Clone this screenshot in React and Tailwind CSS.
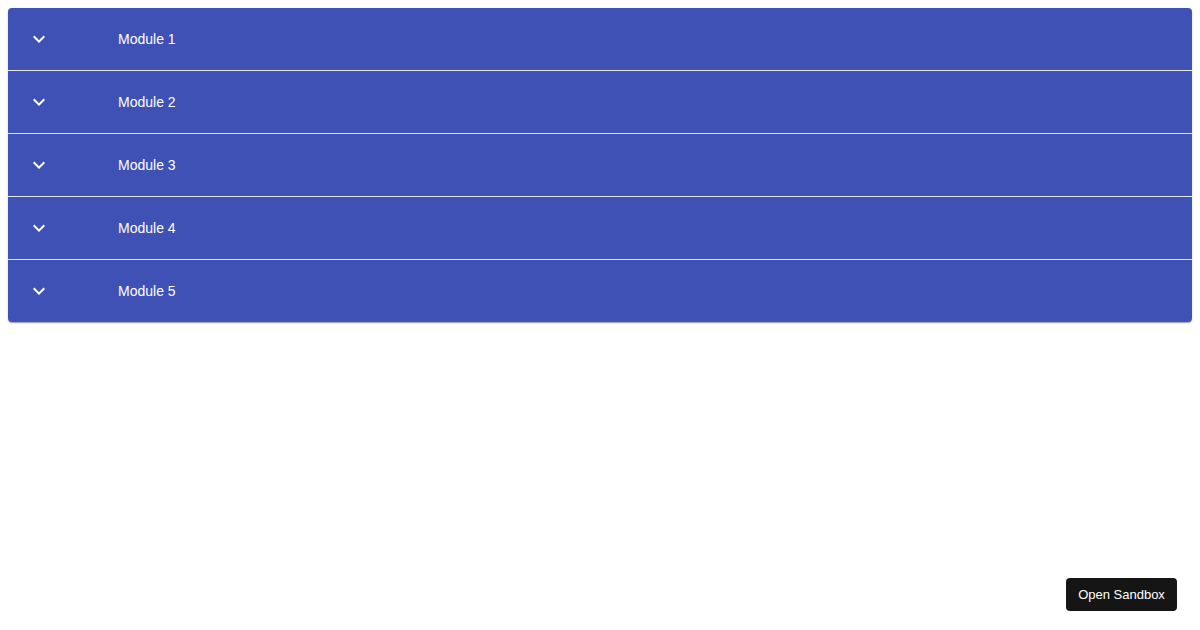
import React from "react";

function ExpandMore() {
  return (
    <svg width="24" height="24" viewBox="0 0 24 24" fill="white" aria-hidden="true">
      <path d="M16.59 8.59 12 13.17 7.41 8.59 6 10l6 6 6-6z" />
    </svg>
  );
}

export default function App() {
  const items = ["Module 1", "Module 2", "Module 3", "Module 4", "Module 5"];
  return (
    <div className="w-[1200px] h-[630px] bg-white relative" style={{ fontFamily: "'Liberation Sans', Arial, sans-serif" }}>
      <div className="p-2">
        <div className="rounded-[4px] overflow-hidden shadow-[0_2px_1px_-1px_rgba(0,0,0,0.2),0_1px_1px_0_rgba(0,0,0,0.14),0_1px_3px_0_rgba(0,0,0,0.12)] bg-[#3f51b5] flex flex-col">
          {items.map((t, i) => (
            <div key={t} className={"flex items-center text-white text-[14px] " + (i > 0 ? "h-[63px] border-t border-[rgba(255,255,255,0.85)]" : "h-[62px]")}>
              <div className="w-[24px] h-[24px] ml-[19px] flex items-center justify-center">
                <ExpandMore />
              </div>
              <span className="ml-[67px]">{t}</span>
            </div>
          ))}
        </div>
      </div>
      <button className="absolute left-[1066px] top-[578px] w-[111px] h-[33px] bg-[#151515] text-white text-[13px] rounded-[4px] flex items-center justify-center">
        Open Sandbox
      </button>
    </div>
  );
}
